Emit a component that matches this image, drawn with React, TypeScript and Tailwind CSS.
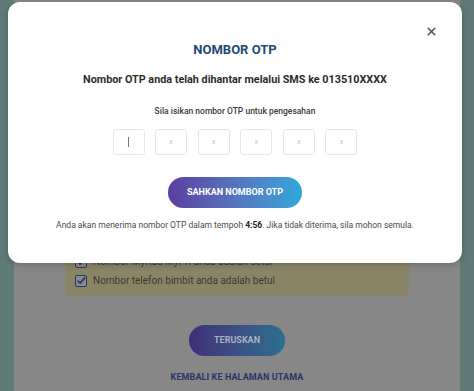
import { X } from "lucide-react";

const font = { fontFamily: "Roboto, 'Liberation Sans', sans-serif" };

function CheckRow({ label }: { label: string }) {
  return (
    <div className="flex h-[19px] items-center gap-[6px]">
      <span className="flex h-[12px] w-[12px] items-center justify-center rounded-[2px] border-[1.5px] border-[#26385e] bg-[#8c8c8c]">
        <svg viewBox="0 0 12 12" className="h-[12px] w-[12px]">
          <path d="M2.5 6.2 L5 8.6 L10.5 2.2" fill="none" stroke="#26385e" strokeWidth="2" strokeLinecap="round" strokeLinejoin="round" />
        </svg>
      </span>
      <span className="text-[10px] text-[#3c3a30]">{label}</span>
    </div>
  );
}

function OtpBox({ first }: { first?: boolean }) {
  return (
    <div className="flex h-[26px] w-[32px] items-center justify-center rounded-[3px] border border-[#e6e6e6] bg-white">
      {first ? (
        <span className="h-[10px] w-px bg-[#777]" />
      ) : (
        <span className="text-[7px] leading-none text-[#c4c4c4]">x</span>
      )}
    </div>
  );
}

export default function App() {
  return (
    <div className="relative h-[391px] w-[474px] overflow-hidden bg-[#5e7b77]" style={font}>
      {/* page underneath, dimmed by the modal backdrop */}
      <div className="mx-[14px] flex h-full flex-col items-center bg-[#878787] pt-[227px]">
        <div className="flex w-[344px] flex-col rounded-[6px] bg-[#8a8466] px-[10px] pb-[6px] pt-[6px]">
          <CheckRow label="Nombor MyKad MyPR anda adalah betul" />
          <CheckRow label="Nombor MyKad MyPR anda adalah betul" />
          <CheckRow label="Nombor telefon bimbit anda adalah betul" />
        </div>
        <div className="mt-[29px] flex h-[31px] w-[96px] items-center justify-center rounded-full bg-gradient-to-r from-[#3e2f78] to-[#2b6f8f] text-[9px] font-bold text-[#a9b0c4]">
          TERUSKAN
        </div>
        <div className="mt-[15px] text-[9px] font-bold tracking-[0.1px] text-[#27356a]">
          KEMBALI KE HALAMAN UTAMA
        </div>
      </div>

      {/* modal */}
      <div className="absolute left-[8px] top-[2px] flex h-[261px] w-[454px] flex-col items-center rounded-[12px] bg-white pt-[40px] shadow-[0_2px_6px_rgba(0,0,0,0.2)]">
        <X className="absolute right-[24px] top-[23px] h-[13px] w-[13px] text-[#555]" strokeWidth={3} />
        <h1 className="text-[13px] font-bold leading-[16px] text-[#1f4a73]">NOMBOR OTP</h1>
        <p className="mt-[14px] text-[10.8px] font-bold leading-[16px] text-[#2c2c2c]">
          Nombor OTP anda telah dihantar melalui SMS ke 013510XXXX
        </p>
        <p className="mt-[17px] text-[8.5px] font-medium leading-[12px] text-[#3a3a3a]">
          Sila isikan nombor OTP untuk pengesahan
        </p>
        <div className="mt-[12px] flex gap-[10.6px]">
          <OtpBox first />
          <OtpBox />
          <OtpBox />
          <OtpBox />
          <OtpBox />
          <OtpBox />
        </div>
        <button className="mt-[22px] flex h-[31px] w-[134px] items-center justify-center rounded-full bg-gradient-to-r from-[#5b3ea0] to-[#2ea7db] text-[9px] font-bold text-white">
          SAHKAN NOMBOR OTP
        </button>
        <p className="mt-[11px] text-[8.5px] leading-[12px] text-[#4a4a4a]">
          Anda akan menerima nombor OTP dalam tempoh <b className="text-[#222]">4:56</b>. Jika tidak diterima, sila mohon semula.
        </p>
      </div>
    </div>
  );
}
